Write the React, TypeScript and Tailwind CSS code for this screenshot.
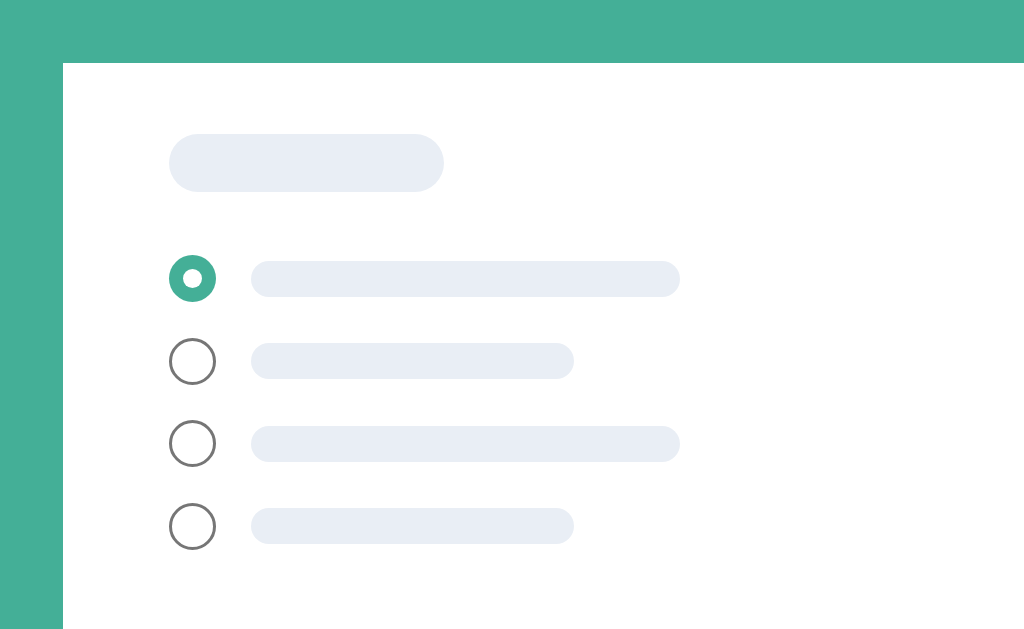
export default function App() {
  const rows = [
    { checked: true, width: "w-[429px]" },
    { checked: false, width: "w-[323px]" },
    { checked: false, width: "w-[429px]" },
    { checked: false, width: "w-[323px]" },
  ];

  return (
    <div className="flex h-[629px] w-[1024px] overflow-hidden bg-[#44af97] pl-[63px] pt-[63px]">
      <div className="flex flex-1 flex-col bg-white pl-[106px] pt-[71px]">
        <div className="h-[58px] w-[275px] rounded-full bg-[#e9eef5]" />
        <div className="mt-[63px] flex flex-col gap-[35.6px]">
          {rows.map((row, i) => (
            <div key={i} className="flex items-center gap-[35px]">
              {row.checked ? (
                <div className="flex h-[47px] w-[47px] items-center justify-center rounded-full bg-[#44af97]">
                  <div className="h-[19px] w-[19px] rounded-full bg-white" />
                </div>
              ) : (
                <div className="h-[47px] w-[47px] rounded-full border-[3px] border-[#767676] bg-white" />
              )}
              <div className={`h-[36px] ${row.width} rounded-full bg-[#e9eef5]`} />
            </div>
          ))}
        </div>
      </div>
    </div>
  );
}
